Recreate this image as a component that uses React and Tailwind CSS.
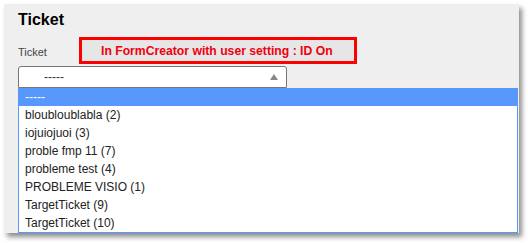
import React from "react";

const items = [
  "bloubloublabla (2)",
  "iojuiojuoi (3)",
  "proble fmp 11 (7)",
  "probleme test (4)",
  "PROBLEME VISIO (1)",
  "TargetTicket (9)",
  "TargetTicket (10)",
];

export default function App() {
  return (
    <div className="w-[528px] h-[243px] bg-white overflow-hidden font-['Liberation_Sans',Arial,sans-serif]">
      <div className="ml-[4px] mt-[4px] w-[515px] h-[229px] bg-[#efefef] shadow-[3px_4px_5px_rgba(0,0,0,0.45)] flex flex-col pl-[14px] pt-[6px]">
        <div className="text-[16px] leading-[20px] font-bold text-black">Ticket</div>
        <div className="flex items-start mt-[7px]">
          <div className="w-[61px] mt-[9px] text-[11px] leading-[13px] text-[#444]">Ticket</div>
          <div className="w-[278px] h-[27px] border-[3px] border-[#ff0000] bg-[#e6e6e6] flex items-center pl-[19px]">
            <span className="text-[12.2px] leading-[14px] font-bold text-[#f00010] whitespace-nowrap">
              In FormCreator with user setting : ID On
            </span>
          </div>
        </div>
        <div className="mt-[2px] w-[269px] h-[22px] bg-white border border-[#777] rounded-t-[3px] flex items-center justify-between pl-[25px] pr-[8px]">
          <span className="text-[12px] leading-[14px] text-[#333]">-----</span>
          <svg width="8" height="6" viewBox="0 0 8 6">
            <polygon points="0,6 8,6 4,0" fill="#888" />
          </svg>
        </div>
        <div className="w-[500px] h-[145px] bg-white border-x border-b border-[#5897fb] flex flex-col">
          <div className="h-[18px] bg-[#5897fb] text-white text-[12px] leading-[18px] pl-[6px]">-----</div>
          {items.map((t, i) => (
            <div key={i} className="h-[18px] text-[12px] leading-[18px] pl-[6px] text-[#222] whitespace-nowrap">
              {t}
            </div>
          ))}
        </div>
      </div>
    </div>
  );
}
